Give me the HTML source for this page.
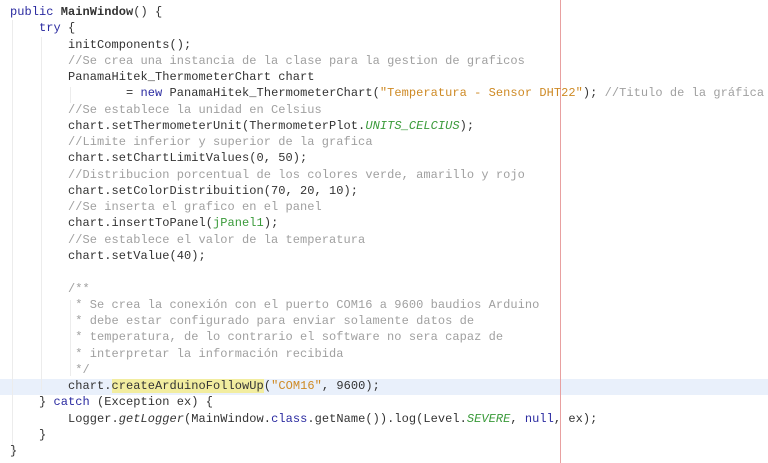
<!DOCTYPE html>
<html><head><meta charset="utf-8"><style>
html,body{margin:0;padding:0;background:#fff;width:768px;height:463px;overflow:hidden;position:relative}
pre{margin:0;position:absolute;left:10px;top:4px;font-family:"Liberation Mono",monospace;font-size:12px;letter-spacing:0.05px;line-height:16.26px;color:#333;white-space:pre}
.k{color:#2a2aa0}.c{color:#a0a0a0}.s{color:#ce8a25}.g{color:#3a9a3a;font-style:italic}.gn{color:#3a9a3a}.b{font-weight:bold}.i{font-style:italic}
.hl{background:#f2eda0}
.cur{position:absolute;left:0;top:379px;width:768px;height:16px;background:#e9f0fb}
.red{position:absolute;left:560px;top:0;width:1px;height:463px;background:#e8a0a0}
.g1{position:absolute;width:1px;background:#ececec}
</style></head><body>
<div class="cur"></div>
<div class="g1" style="left:12px;top:20px;height:435px"></div>
<div class="g1" style="left:41px;top:37px;height:353px"></div>
<div class="g1" style="left:70px;top:87px;height:16px"></div>
<div class="g1" style="left:70px;top:300px;height:76px"></div>
<div class="red"></div>
<pre><span class="k">public</span> <span class="b">MainWindow</span>() {
    <span class="k">try</span> {
        initComponents();
        <span class="c">//Se crea una instancia de la clase para la gestion de graficos</span>
        PanamaHitek_ThermometerChart chart
                = <span class="k">new</span> PanamaHitek_ThermometerChart(<span class="s">"Temperatura - Sensor DHT22"</span>); <span class="c">//Titulo de la gráfica</span>
        <span class="c">//Se establece la unidad en Celsius</span>
        chart.setThermometerUnit(ThermometerPlot.<span class="g">UNITS_CELCIUS</span>);
        <span class="c">//Limite inferior y superior de la grafica</span>
        chart.setChartLimitValues(0, 50);
        <span class="c">//Distribucion porcentual de los colores verde, amarillo y rojo</span>
        chart.setColorDistribuition(70, 20, 10);
        <span class="c">//Se inserta el grafico en el panel</span>
        chart.insertToPanel(<span class="gn">jPanel1</span>);
        <span class="c">//Se establece el valor de la temperatura</span>
        chart.setValue(40);

        <span class="c">/**</span>
<span class="c">         * Se crea la conexión con el puerto COM16 a 9600 baudios Arduino</span>
<span class="c">         * debe estar configurado para enviar solamente datos de</span>
<span class="c">         * temperatura, de lo contrario el software no sera capaz de</span>
<span class="c">         * interpretar la información recibida</span>
<span class="c">         */</span>
        chart.<span class="hl">createArduinoFollowUp</span>(<span class="s">"COM16"</span>, 9600);
    } <span class="k">catch</span> (Exception ex) {
        Logger.<span class="i">getLogger</span>(MainWindow.<span class="k">class</span>.getName()).log(Level.<span class="g">SEVERE</span>, <span class="k">null</span>, ex);
    }
}</pre>
</body></html>
